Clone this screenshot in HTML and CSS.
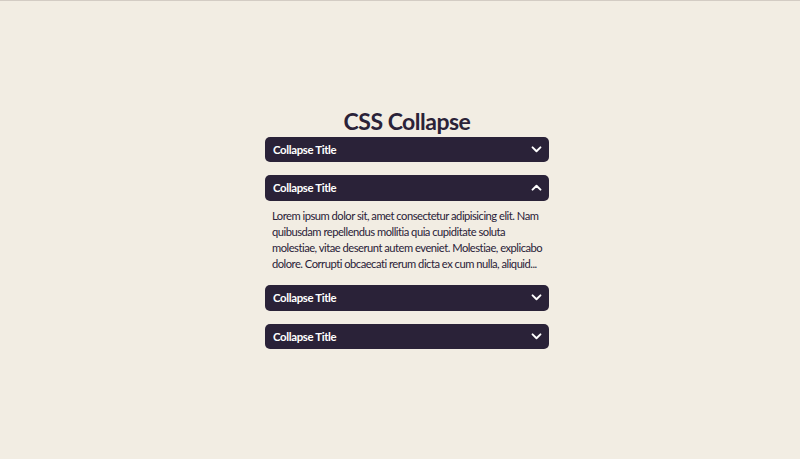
FILE: index.html
```html
<!DOCTYPE html>
<html lang="en">
<head>
  <meta charset="UTF-8" />
  <meta name="viewport" content="width=device-width, initial-scale=1.0" />
  <title>CSS Collapse</title>
  <link rel="stylesheet" href="styles.css">
</head>
<body>
  <main class="wrapper">
    <h1 class="title">CSS Collapse</h1>

    <div class="collapse">
      <div class="collapse-head">
        <span>Collapse Title</span>
        <svg class="chevron" viewBox="0 0 12 8" width="11" height="7"><polyline points="1.5,1.5 6,6 10.5,1.5" /></svg>
      </div>
    </div>

    <div class="collapse open">
      <div class="collapse-head">
        <span>Collapse Title</span>
        <svg class="chevron" viewBox="0 0 12 8" width="11" height="7"><polyline points="1.5,6.5 6,2 10.5,6.5" /></svg>
      </div>
      <p class="collapse-body">Lorem ipsum dolor sit, amet consectetur adipisicing elit. Nam quibusdam repellendus mollitia quia cupiditate soluta molestiae, vitae deserunt autem eveniet. Molestiae, explicabo dolore. Corrupti obcaecati rerum dicta ex cum nulla, aliquid...</p>
    </div>

    <div class="collapse">
      <div class="collapse-head">
        <span>Collapse Title</span>
        <svg class="chevron" viewBox="0 0 12 8" width="11" height="7"><polyline points="1.5,1.5 6,6 10.5,1.5" /></svg>
      </div>
    </div>

    <div class="collapse">
      <div class="collapse-head">
        <span>Collapse Title</span>
        <svg class="chevron" viewBox="0 0 12 8" width="11" height="7"><polyline points="1.5,1.5 6,6 10.5,1.5" /></svg>
      </div>
    </div>
  </main>
</body>
</html>
```

FILE: styles.css
```css
* {
  box-sizing: border-box;
}
body {
  margin: 0;
  height: 100vh;
  padding-left: 14px;
  font-family: Lato, 'Open Sans', sans-serif;
  background: #f2ede3;
  color: #2a2238;
  border-top: 1px solid #d3ccc4;
}
.wrapper {
  width: 284px;
  margin: 0 auto;
  padding-top: 103.5px;
}
.title {
  margin: 0;
  font-size: 23px;
  line-height: 32px;
  font-weight: 700;
  letter-spacing: -0.5px;
  text-align: center;
}
.collapse {
  margin-bottom: 13px;
}
.collapse-head {
  display: flex;
  justify-content: space-between;
  align-items: center;
  height: 25.5px;
  padding: 0 7px 0 8px;
  background: #2a2238;
  color: #fff;
  border-radius: 5px;
  font-size: 11.4px;
  font-weight: 700;
  letter-spacing: -0.35px;
}
.chevron {
  fill: none;
  stroke: #fff;
  stroke-width: 2.2;
  stroke-linecap: round;
  stroke-linejoin: round;
}
.collapse-body {
  margin: 0;
  padding: 7.5px 3px 0 7px;
  font-size: 11.2px;
  line-height: 16px;
  letter-spacing: -0.5px;
}
```
